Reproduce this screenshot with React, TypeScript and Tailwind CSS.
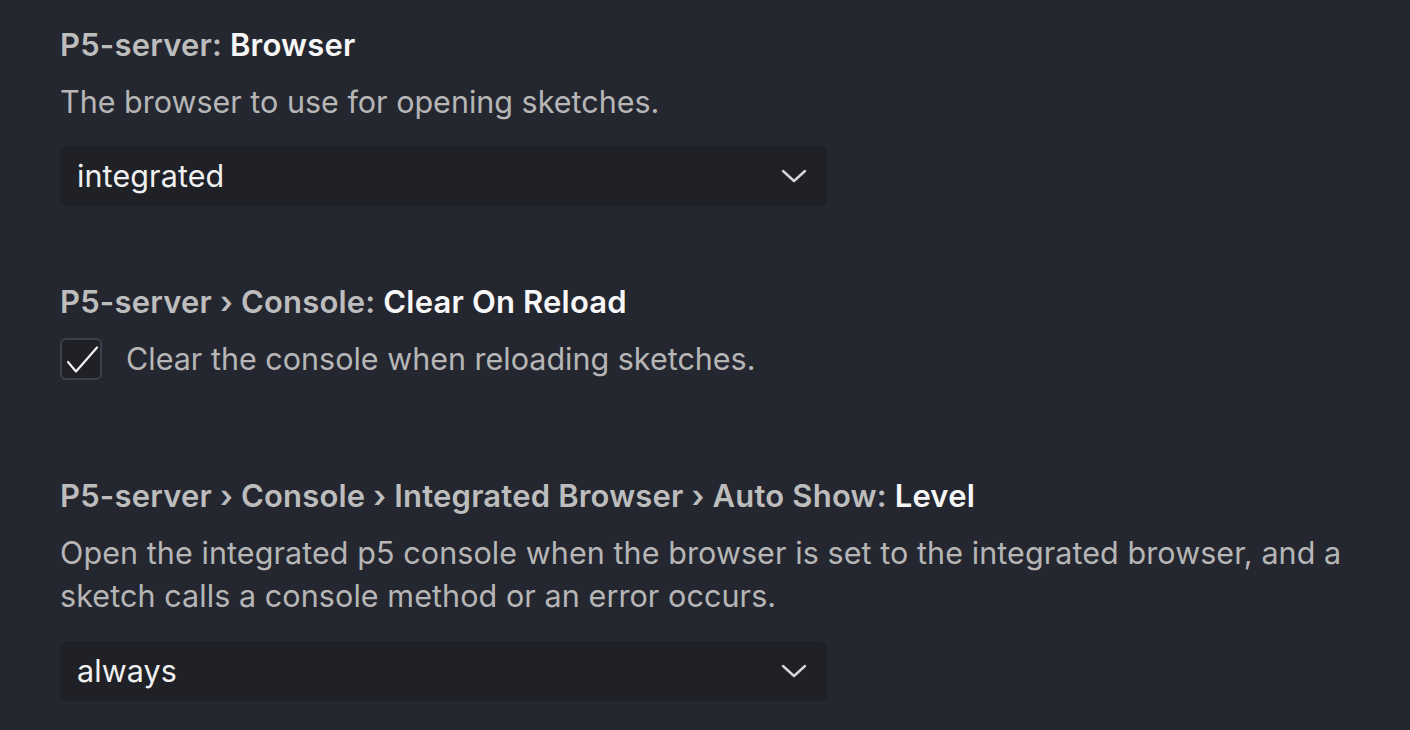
import React from "react";

function Chevron() {
  return (
    <svg width="26" height="16" viewBox="0 0 26 16" fill="none">
      <path d="M2 3 L13 13 L24 3" stroke="#d6d6d6" strokeWidth="2.4" strokeLinecap="round" strokeLinejoin="round" />
    </svg>
  );
}

function Dropdown({ value }: { value: string }) {
  return (
    <div className="w-[767px] h-[60px] rounded-[6px] bg-[#1f2127] flex items-center justify-between pl-[17px] pr-[20px]">
      <span className="text-[30.5px] text-[#f0f0f0] tracking-[0.1px]">{value}</span>
      <Chevron />
    </div>
  );
}

export default function App() {
  return (
    <div
      className="w-[1410px] h-[730px] bg-[#252730] overflow-hidden pl-[60px] pt-[27px]"
      style={{ fontFamily: "Inter, 'Noto Sans', sans-serif" }}
    >
      <div className="text-[31px] leading-[36px] font-semibold text-[#bdbdbd] tracking-[0.18px]">
        P5-server: <span className="text-[#f7f7f7]">Browser</span>
      </div>
      <div className="mt-[17px] text-[30.5px] leading-[43px] text-[#b6b6b6]">
        The browser to use for opening sketches.
      </div>
      <div className="mt-[23px]">
        <Dropdown value="integrated" />
      </div>

      <div className="mt-[78px] text-[31px] leading-[36px] font-semibold text-[#bdbdbd] tracking-[0.18px]">
        P5-server › Console: <span className="text-[#f7f7f7]">Clear On Reload</span>
      </div>
      <div className="mt-[18px] flex items-center h-[42px]">
        <div className="w-[42px] h-[42px] rounded-[6px] border-2 border-[#3d414a] bg-[#1f2127] flex items-center justify-center">
          <svg width="38" height="38" viewBox="0 0 38 38" fill="none">
            <path d="M6 22 L14 31.5 L35 7.5" stroke="#f2f2f2" strokeWidth="2.2" strokeLinecap="round" strokeLinejoin="round" />
          </svg>
        </div>
        <span className="ml-[24px] text-[30.5px] text-[#b6b6b6]">Clear the console when reloading sketches.</span>
      </div>

      <div className="mt-[98px] text-[31px] leading-[36px] font-semibold text-[#bdbdbd] tracking-[0.18px]">
        P5-server › Console › Integrated Browser › Auto Show: <span className="text-[#f7f7f7]">Level</span>
      </div>
      <div className="mt-[17px] w-[1345px] text-[30.5px] leading-[43px] text-[#b6b6b6] whitespace-nowrap tracking-[0.08px]">
        Open the integrated p5 console when the browser is set to the integrated browser, and a
        <br />
        sketch calls a console method or an error occurs.
      </div>
      <div className="mt-[24px]">
        <Dropdown value="always" />
      </div>
    </div>
  );
}
